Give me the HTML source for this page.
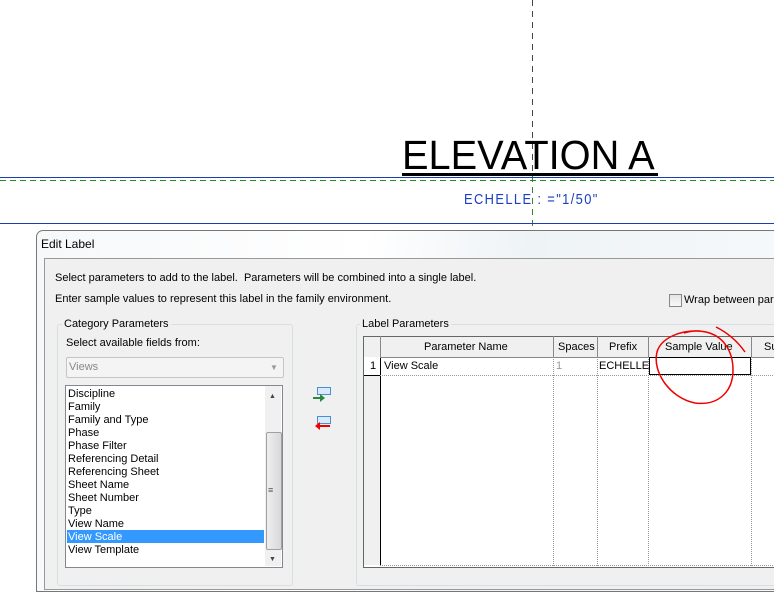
<!DOCTYPE html>
<html><head><style>
body{margin:0;width:774px;height:576px;overflow:hidden;background:#fff;position:relative;font-family:"Liberation Sans",sans-serif;font-size:11px;color:#000}
.a{position:absolute}
.t{position:absolute;white-space:nowrap;font-size:11px;line-height:13px}
</style></head><body>
<svg class="a" style="left:0;top:0" width="774" height="576">
<line x1="532.5" y1="0" x2="532.5" y2="176" stroke="#444" stroke-dasharray="6,5"/>
<line x1="532.5" y1="176" x2="532.5" y2="232" stroke="#2a8a2a" stroke-dasharray="6,5"/>
<line x1="0" y1="177.5" x2="774" y2="177.5" stroke="#1a3fb0"/>
<line x1="0" y1="180.5" x2="774" y2="180.5" stroke="#2a8a2a" stroke-dasharray="6,4"/>
<line x1="0" y1="223.5" x2="774" y2="223.5" stroke="#1a3fb0"/>
<rect x="402" y="173" width="256" height="3" fill="#000"/>
</svg>
<div class="t" style="left:402px;top:135px;font-size:41px;line-height:40px;transform:scaleX(0.97);transform-origin:left">ELEVATION A</div>
<div class="t" style="left:464px;top:192px;font-size:15px;line-height:16px;color:#1a3fc0;transform:scaleX(0.86);transform-origin:left;letter-spacing:1.6px">ECHELLE : ="1/50"</div>
<div class="a" style="left:36px;top:230px;width:760px;height:360px;border:1px solid #777;border-radius:7px 0 0 0;background:linear-gradient(100deg,#f6f8fa 0%,#fff 40%,#eef3f6 60%,#f8fafb 100%)"></div>
<div class="t" style="left:41px;top:238px;font-size:12px">Edit Label</div>
<div class="a" style="left:44px;top:258px;width:740px;height:330px;border:1px solid #999;background:#f0f0f0"></div>
<div class="t" style="left:55px;top:272px">Select parameters to add to the label.&nbsp; Parameters will be combined into a single label.</div>
<div class="t" style="left:55px;top:293px">Enter sample values to represent this label in the family environment.</div>
<div class="a" style="left:669px;top:294px;width:11px;height:11px;border:1px solid #888;background:linear-gradient(#e4e4e4,#f8f8f8)"></div>
<div class="t" style="left:684px;top:294px">Wrap between par</div>
<div class="a" style="left:57px;top:324px;width:234px;height:260px;border:1px solid #d5dfe5;border-radius:3px"></div>
<div class="t" style="left:62px;top:318px;background:#f0f0f0;padding:0 2px">Category Parameters</div>
<div class="t" style="left:66px;top:337px">Select available fields from:</div>
<div class="a" style="left:66px;top:357px;width:216px;height:19px;border:1px solid #c5c5c5;border-radius:2px;background:#f4f4f4"></div>
<div class="t" style="left:69px;top:361px;color:#888">Views</div>
<div class="t" style="left:270px;top:361px;color:#999;font-size:8px">▼</div>
<div class="a" style="left:65px;top:385px;width:216px;height:181px;border:1px solid #828790;background:#fff"></div>
<div class="a" style="left:66px;top:386px;width:16px;height:180px;left:265px;background:#f0f0f0"></div>
<div class="a" style="left:266px;top:432px;width:14px;height:116px;border:1px solid #a0a0a0;border-radius:2px;background:linear-gradient(90deg,#eee,#d8d8d8)"></div>
<div class="t" style="left:269px;top:390px;font-size:7px;color:#444">▲</div>
<div class="t" style="left:269px;top:553px;font-size:7px;color:#444">▼</div>
<div class="t" style="left:268px;top:484px;font-size:9px;color:#555">≡</div>
<div class="a" style="left:67px;top:530px;width:197px;height:13px;background:#3399ff"></div>
<div class="t" style="left:68px;top:388px;line-height:13px">Discipline<br>Family<br>Family and Type<br>Phase<br>Phase Filter<br>Referencing Detail<br>Referencing Sheet<br>Sheet Name<br>Sheet Number<br>Type<br>View Name<br><span style="color:#fff">View Scale</span><br>View Template</div>
<svg class="a" style="left:312px;top:385px" width="20" height="50">
<rect x="5.5" y="2.5" width="13" height="7" fill="#d8eafc" stroke="#4a90d0"/>
<path d="M1 12h7v-3l5 4-5 4v-3H1z" fill="#2a8a3a"/>
<rect x="5.5" y="31.5" width="13" height="7" fill="#d8eafc" stroke="#4a90d0"/>
<path d="M18 40h-10v-3l-5 4 5 4v-3h10z" fill="#e00"/>
</svg>
<div class="a" style="left:356px;top:324px;width:430px;height:260px;border:1px solid #d5dfe5;border-radius:3px"></div>
<div class="t" style="left:360px;top:318px;background:#f0f0f0;padding:0 2px">Label Parameters</div>
<div class="a" style="left:363px;top:336px;width:420px;height:230px;border:1px solid #666;border-right:none;background:#fff"></div>
<div class="a" style="left:364px;top:337px;width:16px;height:228px;background:#f0f0f0;border-right:1px solid #000"></div>
<div class="a" style="left:364px;top:337px;width:420px;height:20px;background:#f0f0f0;border-bottom:1px solid #888"></div>
<div class="a" style="left:364px;top:357px;width:16px;height:18px;background:#fff;border-bottom:1px solid #000"></div>
<svg class="a" style="left:363px;top:336px" width="411" height="231">
<g stroke="#999" stroke-dasharray="1,1">
<line x1="190.5" y1="21" x2="190.5" y2="230"/><line x1="234.5" y1="21" x2="234.5" y2="230"/><line x1="285.5" y1="21" x2="285.5" y2="230"/><line x1="388.5" y1="21" x2="388.5" y2="230"/>
<line x1="17" y1="39.5" x2="411" y2="39.5"/><line x1="17" y1="229.5" x2="411" y2="229.5"/>
</g>
<g stroke="#888"><line x1="17.5" y1="0" x2="17.5" y2="21"/><line x1="190.5" y1="0" x2="190.5" y2="21"/><line x1="234.5" y1="0" x2="234.5" y2="21"/><line x1="285.5" y1="0" x2="285.5" y2="21"/><line x1="388.5" y1="0" x2="388.5" y2="21"/></g>
<rect x="286.5" y="21.5" width="101" height="17" fill="none" stroke="#000"/>
</svg>
<div class="t" style="left:424px;top:341px">Parameter Name</div>
<div class="t" style="left:558px;top:341px">Spaces</div>
<div class="t" style="left:609px;top:341px">Prefix</div>
<div class="t" style="left:665px;top:341px">Sample Value</div>
<div class="t" style="left:764px;top:341px">Su</div>
<div class="t" style="left:370px;top:360px">1</div>
<div class="t" style="left:384px;top:360px">View Scale</div>
<div class="t" style="left:556px;top:360px;color:#999">1</div>
<div class="t" style="left:599px;top:360px">ECHELLE</div>
<svg class="a" style="left:0;top:0" width="774" height="576">
<path d="M700 331C680 330 661 338 657 352C652 372 670 398 695 403C718 406 733 392 733 370C733 352 724 336 706 332C697 330 690 331 684 333" fill="none" stroke="#e00" stroke-width="1.5"/>
<path d="M716 327C728 333 738 342 745 352" fill="none" stroke="#e00" stroke-width="1.5"/>
</svg>
</body></html>
